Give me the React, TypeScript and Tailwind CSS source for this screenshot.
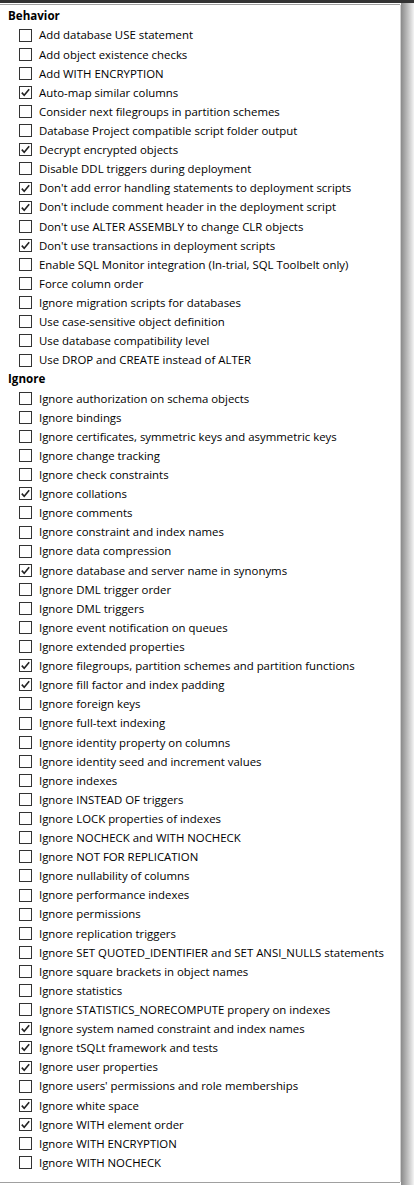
import React from "react";

const behavior: [string, boolean][] = [
  ["Add database USE statement", false],
  ["Add object existence checks", false],
  ["Add WITH ENCRYPTION", false],
  ["Auto-map similar columns", true],
  ["Consider next filegroups in partition schemes", false],
  ["Database Project compatible script folder output", false],
  ["Decrypt encrypted objects", true],
  ["Disable DDL triggers during deployment", false],
  ["Don't add error handling statements to deployment scripts", true],
  ["Don't include comment header in the deployment script", true],
  ["Don't use ALTER ASSEMBLY to change CLR objects", false],
  ["Don't use transactions in deployment scripts", true],
  ["Enable SQL Monitor integration (In-trial, SQL Toolbelt only)", false],
  ["Force column order", false],
  ["Ignore migration scripts for databases", false],
  ["Use case-sensitive object definition", false],
  ["Use database compatibility level", false],
  ["Use DROP and CREATE instead of ALTER", false],
];

const ignore: [string, boolean][] = [
  ["Ignore authorization on schema objects", false],
  ["Ignore bindings", false],
  ["Ignore certificates, symmetric keys and asymmetric keys", false],
  ["Ignore change tracking", false],
  ["Ignore check constraints", false],
  ["Ignore collations", true],
  ["Ignore comments", false],
  ["Ignore constraint and index names", false],
  ["Ignore data compression", false],
  ["Ignore database and server name in synonyms", true],
  ["Ignore DML trigger order", false],
  ["Ignore DML triggers", false],
  ["Ignore event notification on queues", false],
  ["Ignore extended properties", false],
  ["Ignore filegroups, partition schemes and partition functions", true],
  ["Ignore fill factor and index padding", true],
  ["Ignore foreign keys", false],
  ["Ignore full-text indexing", false],
  ["Ignore identity property on columns", false],
  ["Ignore identity seed and increment values", false],
  ["Ignore indexes", false],
  ["Ignore INSTEAD OF triggers", false],
  ["Ignore LOCK properties of indexes", false],
  ["Ignore NOCHECK and WITH NOCHECK", false],
  ["Ignore NOT FOR REPLICATION", false],
  ["Ignore nullability of columns", false],
  ["Ignore performance indexes", false],
  ["Ignore permissions", false],
  ["Ignore replication triggers", false],
  ["Ignore SET QUOTED_IDENTIFIER and SET ANSI_NULLS statements", false],
  ["Ignore square brackets in object names", false],
  ["Ignore statistics", false],
  ["Ignore STATISTICS_NORECOMPUTE propery on indexes", false],
  ["Ignore system named constraint and index names", true],
  ["Ignore tSQLt framework and tests", true],
  ["Ignore user properties", true],
  ["Ignore users' permissions and role memberships", false],
  ["Ignore white space", true],
  ["Ignore WITH element order", true],
  ["Ignore WITH ENCRYPTION", false],
  ["Ignore WITH NOCHECK", false],
];

function Row({ label, checked }: { label: string; checked: boolean }) {
  return (
    <div className="flex h-[19.12px] items-center pl-[19px]">
      <div className="relative h-[13px] w-[13px] shrink-0 border border-[#333333] bg-white">
        {checked && (
          <svg viewBox="0 0 11 11" className="absolute left-0 top-0 h-[11px] w-[11px]">
            <path d="M1.8 5.6 L4.2 8.2 L9.2 2.2" fill="none" stroke="#222" strokeWidth="1.6" />
          </svg>
        )}
      </div>
      <span className="ml-[7px] whitespace-nowrap text-[11.4px] leading-none text-black">{label}</span>
    </div>
  );
}

function Header({ title }: { title: string }) {
  return (
    <div className="flex h-[19.12px] items-center pl-[8px] text-[11.6px] font-bold leading-none text-black">
      {title}
    </div>
  );
}

export default function App() {
  return (
    <div
      className="relative h-[1185px] w-[414px] overflow-hidden bg-white"
      style={{ fontFamily: '"Open Sans", "Noto Sans", sans-serif' }}
    >
      <div className="h-[3px] w-full bg-[#333333]" />
      <div className="flex">
        <div className="w-[401px] shrink-0">
          <div className="h-[2px] w-[400px] border-b border-[#a0a0a0]" />
          <div className="flex h-[1177px] w-[401px] flex-col border-r border-[#d0d0d0] pt-[1.5px]">
            <Header title="Behavior" />
            {behavior.map(([l, c]) => (
              <Row key={l} label={l} checked={c} />
            ))}
            <Header title="Ignore" />
            {ignore.map(([l, c]) => (
              <Row key={l} label={l} checked={c} />
            ))}
          </div>
          <div className="h-[1px] w-[400px] bg-[#a0a0a0]" />
        </div>
        <div className="h-[1182px] w-[13px] bg-gradient-to-r from-[#8a8a8a] via-[#bdbdbd] to-[#f4f4f4]" />
      </div>
    </div>
  );
}
